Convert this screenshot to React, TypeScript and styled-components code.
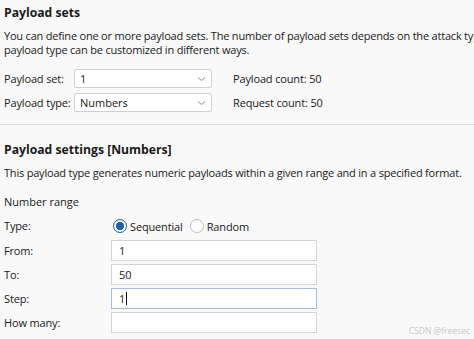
import React from "react";
import styled, { createGlobalStyle } from "styled-components";

const Global = createGlobalStyle`
  html, body { margin: 0; padding: 0; background: #f9f9f9; }
  body { font-family: "Open Sans", "Noto Sans", sans-serif; color: #202020; overflow: hidden; }
`;

const Page = styled.div`
  width: 474px;
  height: 339px;
  position: relative;
  overflow: hidden;
  background: #f9f9f9;
`;

const Section = styled.section<{ $pt: number }>`
  padding: ${(p) => p.$pt}px 0 0 4px;
`;

const Heading = styled.h2`
  margin: 0;
  font-size: 12.2px;
  font-weight: 700;
  line-height: 16px;
  color: #1a1a1a;
`;

const Desc = styled.p<{ $mt?: number }>`
  margin: ${(p) => p.$mt ?? 0}px 0 0 0;
  font-size: 11px;
  line-height: 14px;
  letter-spacing: -0.2px;
  white-space: nowrap;
`;

const FormGrid = styled.div`
  margin-top: 12px;
  display: grid;
  grid-template-columns: 70px 138px auto;
  row-gap: 5px;
  align-items: center;
`;

const Label = styled.span`
  font-size: 11px;
  line-height: 14px;
  letter-spacing: -0.15px;
`;

const Count = styled(Label)`
  padding-left: 21px;
`;

const Select = styled.div`
  height: 19px;
  box-sizing: border-box;
  border: 1px solid #d0d0d0;
  border-radius: 2px;
  background: #fff;
  display: flex;
  align-items: center;
  justify-content: space-between;
  padding: 0 5px 0 5px;
  font-size: 11px;
`;

const Divider = styled.hr`
  margin: 12px 0 0 0;
  border: none;
  border-top: 1px solid #dadada;
`;

const SubLabel = styled.div`
  margin-top: 15px;
  font-size: 11px;
  line-height: 14px;
`;

const RangeGrid = styled.div`
  margin-top: 6px;
  display: grid;
  grid-template-columns: 107px 206px;
  grid-template-rows: 22px repeat(4, 21px);
  row-gap: 3px;
  align-items: center;
`;

const Field = styled.div<{ $focus?: boolean }>`
  height: 21px;
  box-sizing: border-box;
  border: 1px solid ${(p) => (p.$focus ? "#a3bedd" : "#d4d4d4")};
  background: #fff;
  display: flex;
  align-items: center;
  padding-left: 7px;
  font-size: 11px;
`;

const Caret = styled.span`
  display: inline-block;
  width: 1px;
  height: 13px;
  background: #111;
  margin-left: 1px;
`;

const RadioRow = styled.div`
  display: flex;
  align-items: center;
  font-size: 11px;
  letter-spacing: -0.15px;
`;

const Radio = styled.span<{ $on?: boolean; $ml: number }>`
  width: 14px;
  height: 14px;
  box-sizing: border-box;
  border-radius: 50%;
  border: 1px solid ${(p) => (p.$on ? "#1a5fa8" : "#bdbdbd")};
  background: #fff;
  display: inline-flex;
  align-items: center;
  justify-content: center;
  margin: 0 3px 0 ${(p) => p.$ml}px;
  &::after {
    content: "";
    display: ${(p) => (p.$on ? "block" : "none")};
    width: 8px;
    height: 8px;
    border-radius: 50%;
    background: #1a5fa8;
  }
`;

const Watermark = styled.div`
  position: absolute;
  right: 4px;
  bottom: 3px;
  font-size: 8.5px;
  color: #c6c6c6;
`;

const Chevron = () => (
  <svg width="9" height="6" viewBox="0 0 9 6">
    <path d="M1 1.5 L4.5 4.5 L8 1.5" fill="none" stroke="#8a8a8a" strokeWidth="1" />
  </svg>
);

export default function App() {
  return (
    <>
      <Global />
      <Page>
        <Section $pt={5}>
          <Heading>Payload sets</Heading>
          <Desc $mt={8}>You can define one or more payload sets. The number of payload sets depends on the attack type defined in the Positions tab.</Desc>
          <Desc>payload type can be customized in different ways.</Desc>
          <FormGrid>
            <Label>Payload set:</Label>
            <Select>1<Chevron /></Select>
            <Count>Payload count: 50</Count>
            <Label>Payload type:</Label>
            <Select>Numbers<Chevron /></Select>
            <Count>Request count: 50</Count>
          </FormGrid>
        </Section>
        <Divider />
        <Section $pt={17}>
          <Heading>Payload settings [Numbers]</Heading>
          <Desc $mt={8}>This payload type generates numeric payloads within a given range and in a specified format.</Desc>
          <SubLabel>Number range</SubLabel>
          <RangeGrid>
            <Label>Type:</Label>
            <RadioRow>
              <Radio $on $ml={2} />Sequential
              <Radio $ml={7} />Random
            </RadioRow>
            <Label>From:</Label>
            <Field>1</Field>
            <Label>To:</Label>
            <Field>50</Field>
            <Label>Step:</Label>
            <Field $focus>1<Caret /></Field>
            <Label>How many:</Label>
            <Field />
          </RangeGrid>
        </Section>
        <Watermark>CSDN @freesec</Watermark>
      </Page>
    </>
  );
}
